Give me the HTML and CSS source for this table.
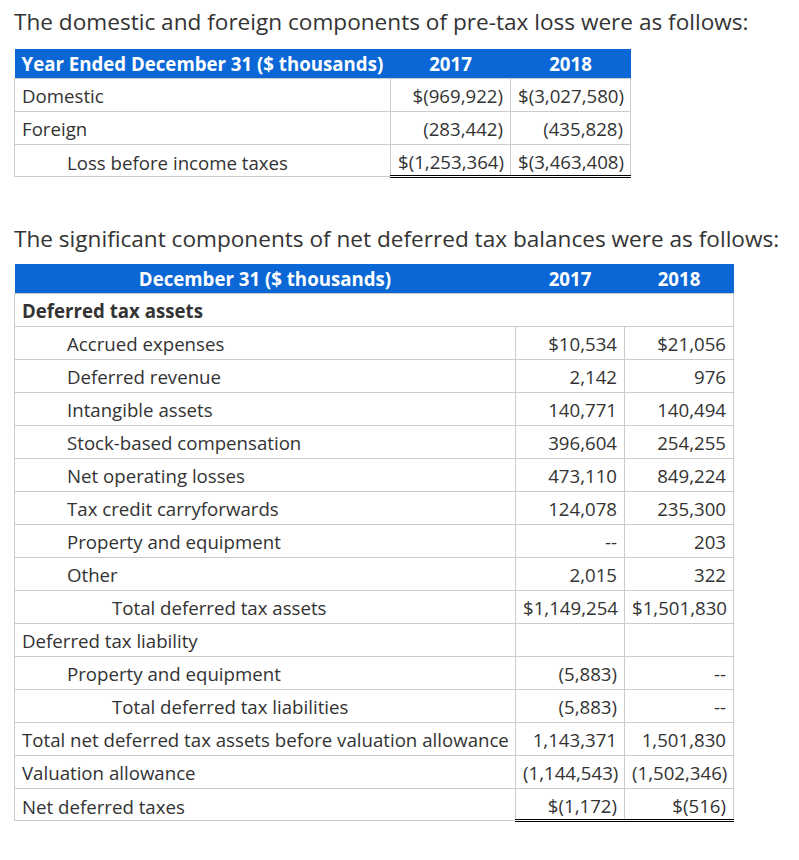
FILE: index.html
```html
<!DOCTYPE html>
<html>
<head>
<meta charset="utf-8">
<link rel="stylesheet" href="styles.css">
</head>
<body>
<div class="page">
  <p class="title">The domestic and foreign components of pre-tax loss were as follows:</p>
  <table class="fin t1">
    <colgroup><col class="c-label1"><col class="c-num1"><col class="c-num1"></colgroup>
    <thead>
      <tr><th class="left">Year Ended December 31 ($ thousands)</th><th>2017</th><th>2018</th></tr>
    </thead>
    <tbody>
      <tr><td>Domestic</td><td class="num">$(969,922)</td><td class="num">$(3,027,580)</td></tr>
      <tr><td>Foreign</td><td class="num">(283,442)</td><td class="num">(435,828)</td></tr>
      <tr class="total dbl"><td class="ind1">Loss before income taxes</td><td class="num">$(1,253,364)</td><td class="num">$(3,463,408)</td></tr>
    </tbody>
  </table>

  <p class="title second">The significant components of net deferred tax balances were as follows:</p>
  <table class="fin t2">
    <colgroup><col class="c-label2"><col class="c-num2"><col class="c-num2"></colgroup>
    <thead>
      <tr><th>December 31 ($ thousands)</th><th>2017</th><th>2018</th></tr>
    </thead>
    <tbody>
      <tr><td colspan="3" class="bold">Deferred tax assets</td></tr>
      <tr><td class="ind1">Accrued expenses</td><td class="num">$10,534</td><td class="num">$21,056</td></tr>
      <tr><td class="ind1">Deferred revenue</td><td class="num">2,142</td><td class="num">976</td></tr>
      <tr><td class="ind1">Intangible assets</td><td class="num">140,771</td><td class="num">140,494</td></tr>
      <tr><td class="ind1">Stock-based compensation</td><td class="num">396,604</td><td class="num">254,255</td></tr>
      <tr><td class="ind1">Net operating losses</td><td class="num">473,110</td><td class="num">849,224</td></tr>
      <tr><td class="ind1">Tax credit carryforwards</td><td class="num">124,078</td><td class="num">235,300</td></tr>
      <tr><td class="ind1">Property and equipment</td><td class="num">--</td><td class="num">203</td></tr>
      <tr><td class="ind1">Other</td><td class="num">2,015</td><td class="num">322</td></tr>
      <tr class="total"><td class="ind2">Total deferred tax assets</td><td class="num">$1,149,254</td><td class="num">$1,501,830</td></tr>
      <tr><td>Deferred tax liability</td><td class="num"></td><td class="num"></td></tr>
      <tr><td class="ind1">Property and equipment</td><td class="num">(5,883)</td><td class="num">--</td></tr>
      <tr class="total"><td class="ind2">Total deferred tax liabilities</td><td class="num">(5,883)</td><td class="num">--</td></tr>
      <tr class="total"><td>Total net deferred tax assets before valuation allowance</td><td class="num">1,143,371</td><td class="num">1,501,830</td></tr>
      <tr><td>Valuation allowance</td><td class="num">(1,144,543)</td><td class="num">(1,502,346)</td></tr>
      <tr class="total dbl"><td>Net deferred taxes</td><td class="num">$(1,172)</td><td class="num">$(516)</td></tr>
    </tbody>
  </table>
</div>
</body>
</html>
```

FILE: styles.css
```css
html, body {
  margin: 0;
  padding: 0;
  background: #ffffff;
}

.page {
  padding: 0 14px;
  font-family: "Open Sans", "DejaVu Sans", sans-serif;
  color: #333333;
}

.title {
  margin: 0;
  padding-top: 7px;
  height: 42px;
  font-size: 22.6px;
  line-height: 30px;
  color: #333333;
}

.title.second {
  margin-top: 45px;
  padding-top: 1px;
  height: 40px;
}

.fin {
  border-collapse: collapse;
  table-layout: fixed;
  font-size: 18.67px;
}

.t1 { width: 617px; }
.t2 { width: 719px; }

.c-label1 { width: 376px; }
.c-num1 { width: 120px; }
.c-label2 { width: 501px; }
.c-num2 { width: 109px; }

.fin th {
  background: #0b67d6;
  color: #ffffff;
  font-weight: 700;
  height: 29px;
  padding: 0 7px;
  text-align: center;
  border: none;
  line-height: 29px;
}

.fin th.left { text-align: left; }

.fin td {
  height: 31px;
  padding: 1px 7px 0;
  line-height: 31px;
  border: 1px solid #cccccc;
  white-space: nowrap;
}

.fin td.num {
  text-align: right;
  padding-right: 7px;
}

.fin td.bold { font-weight: 700; }
.fin td.ind1 { padding-left: 52px; }
.fin td.ind2 { padding-left: 97px; }

.fin tr.total td.num { border-top: 1px solid #000000; }
.fin tr.dbl td {
  height: 27px;
  padding-top: 3px;
  line-height: 27px;
}
.fin tr.dbl td.num { border-bottom: 3px double #000000; }
```
